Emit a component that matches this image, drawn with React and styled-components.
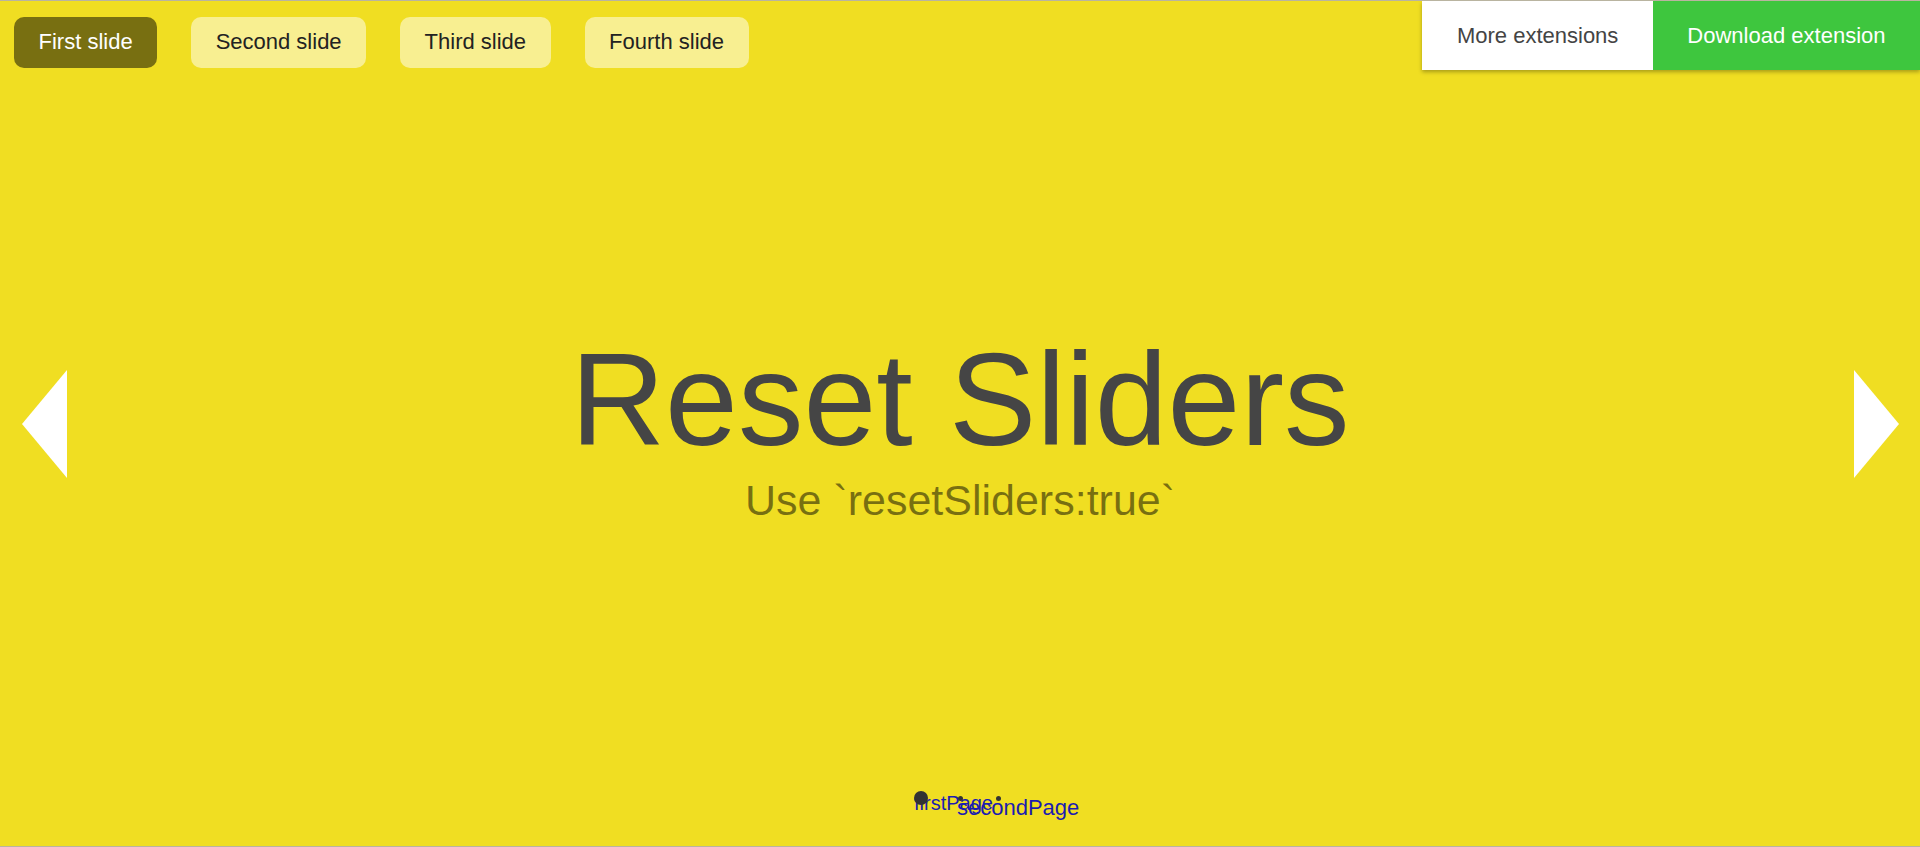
import React from "react";
import styled, { createGlobalStyle } from "styled-components";

const GlobalStyle = createGlobalStyle`
  * { box-sizing: border-box; }
  html, body { margin: 0; padding: 0; }
  body {
    font-family: "Liberation Sans", Arial, sans-serif;
    background: #ffffff;
    overflow: hidden;
  }
`;

const Page = styled.div`
  position: relative;
  width: 100%;
  height: 847px;
  background: #f0de22;
  border-top: 1px solid #b9b4a0;
  border-bottom: 1px solid #b9b4a0;
  overflow: hidden;
`;

const Section = styled.section`
  height: 100%;
  display: flex;
  flex-direction: column;
  align-items: center;
  justify-content: center;
  padding-top: 2px;
  text-align: center;
`;

const Title = styled.h1`
  margin: 0;
  font-size: 131px;
  line-height: 150px;
  font-weight: 400;
  color: #454545;
`;

const Subtitle = styled.p`
  margin: 0;
  font-size: 43px;
  line-height: 50px;
  color: rgba(0, 0, 0, 0.5);
`;

const Menu = styled.ul`
  position: absolute;
  top: 16px;
  left: 14px;
  display: flex;
  gap: 34px;
  margin: 0;
  padding: 0;
  list-style: none;
`;

const MenuButton = styled.li`
  height: 51px;
  line-height: 50px;
  padding: 0 24.5px;
  border-radius: 10px;
  font-size: 22px;
  color: ${(p) => (p.$active ? "#ffffff" : "#222222")};
  background: ${(p) =>
    p.$active ? "rgba(0, 0, 0, 0.5)" : "rgba(255, 255, 255, 0.5)"};
  cursor: pointer;
`;

const Extensions = styled.div`
  position: absolute;
  top: 0;
  right: 0;
  display: flex;
  box-shadow: 0 2px 4px rgba(0, 0, 0, 0.3);
`;

const ExtButton = styled.a`
  display: block;
  height: 69px;
  line-height: 69px;
  padding: 0 34.5px;
  font-size: 22px;
  text-decoration: none;
  color: ${(p) => (p.$primary ? "#ffffff" : "#444444")};
  background: ${(p) => (p.$primary ? "#3ec63e" : "#ffffff")};
`;

const Arrow = styled.div`
  position: absolute;
  top: 50%;
  margin-top: -54px;
  width: 0;
  height: 0;
  border-style: solid;
  cursor: pointer;
  ${(p) =>
    p.$dir === "left"
      ? `left: 22px; border-width: 54px 45px 54px 0; border-color: transparent #ffffff transparent transparent;`
      : `right: 21px; border-width: 54px 0 54px 45px; border-color: transparent transparent transparent #ffffff;`}
`;

const SlidesNav = styled.ul`
  position: absolute;
  top: 789px;
  left: 50%;
  margin: 0 0 0 -46px;
  padding: 0;
  list-style: none;
  display: flex;
  align-items: flex-start;
`;

const NavItem = styled.li`
  position: relative;
  width: ${(p) => p.$width}px;
  height: 16px;
  display: flex;
  align-items: center;
`;

const Dot = styled.span`
  position: relative;
  z-index: 1;
  display: block;
  width: ${(p) => (p.$active ? 14 : 5)}px;
  height: ${(p) => (p.$active ? 14 : 5)}px;
  margin-left: ${(p) => p.$offset || 0}px;
  border-radius: 50%;
  background: #333333;
`;

const NavLabel = styled.a`
  position: absolute;
  left: 0;
  top: ${(p) => p.$top}px;
  font-size: ${(p) => p.$size}px;
  line-height: ${(p) => p.$size}px;
  color: #1c1cb0;
  text-decoration: none;
  white-space: nowrap;
`;

export default function App() {
  const slides = ["First slide", "Second slide", "Third slide", "Fourth slide"];
  return (
    <>
      <GlobalStyle />
      <Page>
        <Section>
          <Title>Reset Sliders</Title>
          <Subtitle>Use `resetSliders:true`</Subtitle>
        </Section>

        <Menu>
          {slides.map((s, i) => (
            <MenuButton key={s} $active={i === 0}>
              {s}
            </MenuButton>
          ))}
        </Menu>

        <Extensions>
          <ExtButton href="#">More extensions</ExtButton>
          <ExtButton href="#" $primary>
            Download extension
          </ExtButton>
        </Extensions>

        <Arrow $dir="left" />
        <Arrow $dir="right" />

        <SlidesNav>
          <NavItem $width={43}>
            <NavLabel href="#" $size={20} $top={3}>
              firstPage
            </NavLabel>
            <Dot $active />
          </NavItem>
          <NavItem $width={39}>
            <NavLabel href="#" $size={22} $top={7}>
              secondPage
            </NavLabel>
            <Dot $offset={1} />
          </NavItem>
          <NavItem $width={10}>
            <Dot />
          </NavItem>
        </SlidesNav>
      </Page>
    </>
  );
}
